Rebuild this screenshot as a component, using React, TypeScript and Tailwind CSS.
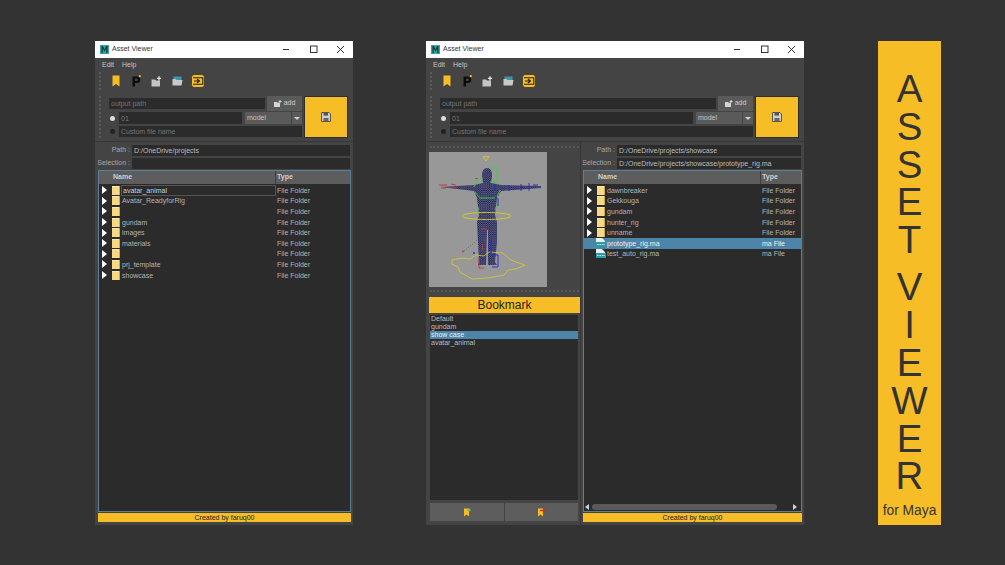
const font = "font-['Liberation_Sans',Arial,sans-serif]";

function MayaLogo() {
  return (
    <svg width="9" height="9" viewBox="0 0 9 9">
      <rect width="9" height="9" fill="#37a5a0" />
      <path d="M1.5 8V1h1.4L4.5 4.5 6.1 1h1.4v7H6.2V3.6L4.5 6.8 2.8 3.6V8z" fill="#12393d" />
    </svg>
  );
}

function TitleBar() {
  return (
    <div className="h-[17px] bg-white flex items-center pl-[5px] pr-[9px] shrink-0">
      <MayaLogo />
      <span className="ml-[3px] text-[7px] text-[#333]">Asset Viewer</span>
      <svg className="ml-auto" width="61" height="9" viewBox="0 0 61 9" fill="none" stroke="#333" strokeWidth="1">
        <path d="M0 4.5h6" />
        <rect x="27.5" y="1" width="6.5" height="6.5" />
        <path d="M54 1l7 7M61 1l-7 7" />
      </svg>
    </div>
  );
}

function Bookmark() {
  return (
    <svg width="8" height="12" viewBox="0 0 8 12">
      <path d="M0.5 0.5h7v11L4 9 0.5 11.5z" fill="#f6bd27" />
    </svg>
  );
}

function ToolIcon({ children }: { children: React.ReactNode }) {
  return <div className="w-[20.6px] flex justify-center shrink-0">{children}</div>;
}

function Toolbar() {
  return (
    <div className="h-[18px] mb-[6px] flex items-center shrink-0 pl-[4px]">
      <div className="h-[18px] w-[3px] border-l-2 border-dotted border-[#5a5a5a]" />
      <div className="ml-[3.5px] flex items-center">
        <ToolIcon><Bookmark /></ToolIcon>
        <ToolIcon>
          <svg width="9" height="12" viewBox="0 0 9 12">
            <path fillRule="evenodd" d="M0.5 1.5h4.5a3 3 0 0 1 0 6.5H3v3.5H0.5zM3 3.5v2.5h1.6a1.25 1.25 0 0 0 0-2.5z" fill="#0c0c0c" />
            <circle cx="7.8" cy="1.2" r="1.1" fill="#f6bd27" />
          </svg>
        </ToolIcon>
        <ToolIcon>
          <svg width="11" height="11" viewBox="0 0 11 11">
            <path d="M0.5 3.5h3.5l1 1h4v6h-8.5z" fill="#c4c4c4" />
            <path d="M8 0.3v4.2M5.9 2.4h4.2" stroke="#e6e6e6" strokeWidth="1.3" />
          </svg>
        </ToolIcon>
        <ToolIcon>
          <svg width="11" height="10" viewBox="0 0 11 10">
            <path d="M1.5 0.5h8v4h-8z" fill="#3d97ab" />
            <path d="M0.5 3h3l1 1h6l-1 5.5h-9z" fill="#c8c8c8" />
          </svg>
        </ToolIcon>
        <ToolIcon>
          <svg width="14" height="14" viewBox="0 0 14 14" fill="none">
            <rect x="0.5" y="0.5" width="13" height="13" rx="3" fill="#f6bd27" stroke="#2a2a2a" strokeWidth="0.7" />
            <path d="M2 3.8h9.8v6.4H2" stroke="#222" strokeWidth="1.1" />
            <path d="M3 7h5M6 5l2.4 2L6 9" stroke="#222" strokeWidth="1.2" />
          </svg>
        </ToolIcon>
      </div>
    </div>
  );
}

function Floppy() {
  return (
    <svg width="10" height="10" viewBox="0 0 10 10">
      <path d="M0.5 0.5h7.5l1.5 1.5v7.5h-9z" fill="#cfcfcf" stroke="#3a3a3a" strokeWidth="0.8" />
      <rect x="2.5" y="1" width="4.5" height="2.6" fill="#555" />
      <rect x="2.5" y="6" width="5" height="3" fill="#666" />
    </svg>
  );
}

function Field({ text, faint }: { text?: string; faint?: boolean }) {
  return (
    <div className={`flex-1 min-w-0 bg-[#2b2b2b] flex items-center px-[2px] text-[7px] leading-none whitespace-nowrap overflow-hidden ${faint ? "text-[#757575]" : "text-[#bdbdbd]"}`}>
      {text}
    </div>
  );
}

function Radio({ on }: { on?: boolean }) {
  return <div className={`w-[5px] h-[5px] rounded-full shrink-0 ${on ? "bg-[#dcdcdc]" : "bg-[#222]"}`} />;
}

function OutputForm() {
  return (
    <div className="flex shrink-0 pl-[4px] pr-[5px] h-[42px]">
      <div className="h-[42px] w-[3px] border-l-2 border-dotted border-[#5a5a5a]" />
      <div className="flex-1 min-w-0 ml-[7px] mr-[2px] flex flex-col">
        <div className="h-[15px] flex items-center gap-[2px]">
          <div className="flex-1 min-w-0 h-[11px] flex"><Field text="output path" faint /></div>
          <div className="w-[35px] h-[15px] bg-[#5a5a5a] flex items-center justify-center gap-[2px] text-[7px] text-[#cfcfcf]">
            <svg width="8" height="7" viewBox="0 0 8 7"><path d="M0 2h3l.6.7H6V7H0z" fill="#d5d5d5" /><path d="M6 0v3M4.6 1.5h3" stroke="#d5d5d5" /></svg>
            add
          </div>
        </div>
        <div className="h-[14px] flex items-center">
          <div className="w-[10px] pl-[1px] flex"><Radio on /></div>
          <div className="flex-1 min-w-0 h-[12px] flex"><Field text="01" faint /></div>
          <div className="ml-[3px] w-[57px] h-[12px] bg-[#5a5a5a] flex items-center text-[7px] text-[#c4c4c4] pl-[2px]">
            model
            <div className="ml-auto h-full w-[11px] border-l border-[#444] flex items-center justify-center">
              <div className="w-0 h-0 border-x-[3px] border-x-transparent border-t-[3px] border-t-[#d0d0d0]" />
            </div>
          </div>
        </div>
        <div className="h-[13px] flex items-center">
          <div className="w-[10px] pl-[1px] flex"><Radio /></div>
          <div className="flex-1 min-w-0 h-[11px] flex"><Field text="Custom file name" faint /></div>
        </div>
      </div>
      <div className="w-[44px] h-[42px] bg-[#f6bd27] border border-[#2e2e2e] flex items-center justify-center shrink-0">
        <Floppy />
      </div>
    </div>
  );
}

function PathRow({ label, value }: { label: string; value?: string }) {
  return (
    <div className="h-[13px] flex items-center">
      <div className="w-[34px] pr-[2px] flex justify-end text-[7px] text-[#a8a8a8] whitespace-nowrap shrink-0">{label}</div>
      <div className="flex-1 min-w-0 h-[11px] flex mr-[1px]"><Field text={value} /></div>
    </div>
  );
}

function Arrow() {
  return <div className="w-0 h-0 border-y-[4.5px] border-y-transparent border-l-[5px] border-l-white" />;
}

function FolderIcon() {
  return (
    <svg width="8" height="9" viewBox="0 0 8 9">
      <rect width="8" height="9" fill="#f7d983" />
      <rect x="7" width="1" height="9" fill="#c9a94f" />
      <rect width="7" height="1" fill="#fbe8ad" />
    </svg>
  );
}

function MaFile() {
  return (
    <svg width="10" height="10" viewBox="0 0 10 10" className="-ml-[1px]">
      <path d="M0 0h6l3 3v2H0z" fill="#e5f2f3" />
      <rect y="4" width="10" height="5" fill="#2a9ca8" />
      <path d="M1 6.5h8" stroke="#e5f2f3" strokeWidth="1" strokeDasharray="1.5 1" />
    </svg>
  );
}

type Row = { name: string; kind?: "folder" | "file"; selected?: boolean; editing?: boolean };

function TreeRow({ row }: { row: Row }) {
  const file = row.kind === "file";
  return (
    <div className={`h-[10.6px] flex items-center text-[7px] leading-none whitespace-nowrap ${row.selected ? "bg-[#4d85a9] text-[#f0f0f0]" : "text-[#b4b4b4]"}`}>
      <div className="w-[177px] flex items-center shrink-0 h-full">
        <div className="w-[13px] pl-[3px] shrink-0 flex">{!file && <Arrow />}</div>
        <div className="w-[10px] shrink-0 flex">{file ? <MaFile /> : <FolderIcon />}</div>
        <span className={row.editing ? "flex-1 h-full flex items-center border border-[#555] -ml-[1px] pl-[1px] text-[#cfcfcf]" : ""}>{row.name}</span>
      </div>
      <span className="pl-[1px]">{file ? "ma File" : "File Folder"}</span>
    </div>
  );
}

function Tree({ rows, scrollbar }: { rows: Row[]; scrollbar?: boolean }) {
  return (
    <div className="flex-1 min-h-0 flex flex-col bg-[#2b2b2b] border border-[#5c7f95]">
      <div className="h-[13px] bg-[#5d5d5d] flex items-center text-[7px] font-bold text-[#cfcfcf] shrink-0">
        <div className="w-[177px] pl-[14px] border-r border-[#3e3e3e] h-full flex items-center shrink-0">Name</div>
        <div className="pl-[1px]">Type</div>
      </div>
      <div className="flex-1 min-h-0 pt-[1px] flex flex-col">
        {rows.map((row) => <TreeRow key={row.name + row.kind} row={row} />)}
      </div>
      {scrollbar && (
        <div className="h-[8px] flex items-center px-[1px] shrink-0">
          <div className="w-0 h-0 border-y-[3px] border-y-transparent border-r-[4px] border-r-[#d0d0d0]" />
          <div className="ml-[3px] w-[185px] h-[6px] rounded-full bg-[#5a5a5a]" />
          <div className="ml-auto mr-[3px] w-0 h-0 border-y-[3px] border-y-transparent border-l-[4px] border-l-[#d0d0d0]" />
        </div>
      )}
    </div>
  );
}

function Footer() {
  return (
    <div className="h-[9px] mt-[1px] bg-[#f6bd27] text-[#222] text-[7px] leading-[9px] text-center shrink-0">Created by faruq00</div>
  );
}

function Figure() {
  return (
    <svg width="118" height="135" viewBox="0 0 118 135">
      <defs>
        <pattern id="mesh" width="2.2" height="2.2" patternUnits="userSpaceOnUse">
          <rect width="2.2" height="2.2" fill="#24265a" />
          <path d="M0 0l2.2 2.2M2.2 0L0 2.2" stroke="#7a7b90" strokeWidth="0.4" />
        </pattern>
      </defs>
      <rect width="118" height="135" fill="#989898" />
      <path d="M12 35L45 33L54 31L53 24Q53 16 58 16Q63 16 63 24L62 31L72 33L112 34L112 36L72 39L68 46L66 63L68 70L68 90L66 110L68 113L59 113L59 78L58 78L57 113L49 113L50 110L49 90L48 70L50 63L48 46L45 39Z" fill="url(#mesh)" />
      <path d="M45 35l4-8h5M61 16h7v14h-7M46 40l4 5M71 38l-3 7M50 46h16M48 53l2 5M68 53l-2 5" stroke="#35d43a" strokeWidth="0.9" fill="none" />
      <ellipse cx="57.5" cy="64" rx="24.5" ry="3.5" stroke="#d4cb2e" strokeWidth="0.9" fill="none" />
      <path d="M54 5l6-.5-3 4.5z" stroke="#d4cb2e" strokeWidth="0.9" fill="none" />
      <path d="M23 108l10-2 8 1 6-4 8 1 5-4 14 1 8 7 5 2 9 3-9 4-8 1-4 5-16 3-16 1-12-7-2-5-6-3z" stroke="#d4cb2e" strokeWidth="0.8" fill="none" />
      <path d="M10 33h8M12 36h5M22 32l5 1M28 36h-5M46 27l3-1M52 77h6M54 92l-1 6M50 105v11h5" stroke="#c8323a" strokeWidth="0.9" fill="none" />
      <path d="M80 33v6M92 32v7M100 31v8M104 33h5M66 32v6M62 88v14M63 103h6v12h-6M69 46v8" stroke="#2424d8" strokeWidth="0.9" fill="none" />
      <path d="M35 99l10-8 5-5" stroke="#555" strokeWidth="0.6" strokeDasharray="1.2 1.4" fill="none" />
      <circle cx="34" cy="99.5" r="0.9" fill="#c8323a" />
      <circle cx="45" cy="101" r="0.9" fill="#2424d8" />
    </svg>
  );
}

function Grip() {
  return <div className="h-[3px] border-t-2 border-dotted border-[#565656] mx-[1px] shrink-0" />;
}

function LeftPanel() {
  const marks = ["Default", "gundam", "show case", "avatar_animal"];
  return (
    <div className="w-[151px] shrink-0 flex flex-col h-full">
      <div className="mt-[4px]"><Grip /></div>
      <div className="mt-[3px] w-[118px] h-[135px] shrink-0 flex"><Figure /></div>
      <div className="mt-[3px]"><Grip /></div>
      <div className="mt-[4px] h-[16px] bg-[#f6bd27] flex items-center justify-center text-[12px] text-[#222] shrink-0">Bookmark</div>
      <div className="mt-[2px] flex-1 min-h-0 ml-[1px] mr-[2px] bg-[#2b2b2b] text-[7px] text-[#bdbdbd]">
        {marks.map((m) => (
          <div key={m} className={`h-[8px] leading-[8px] pl-[1px] ${m === "show case" ? "bg-[#4d85a9] text-[#f0f0f0]" : ""}`}>{m}</div>
        ))}
      </div>
      <div className="mt-[3px] mb-[4px] ml-[1px] mr-[2px] h-[18px] bg-[#5d5d5d] flex shrink-0">
        <div className="flex-1 flex items-center justify-center border-r border-[#444]">
          <svg width="8" height="9" viewBox="0 0 8 9"><path d="M1 0.5h5v8L3.5 6.5 1 8.5z" fill="#f6bd27" /><circle cx="6" cy="2" r="1.6" fill="#6fbf5a" /></svg>
        </div>
        <div className="flex-1 flex items-center justify-center">
          <svg width="9" height="9" viewBox="0 0 9 9"><path d="M1 0.5h5v8L3.5 6.5 1 8.5z" fill="#f6bd27" /><path d="M3 2.5h6" stroke="#e02020" strokeWidth="1.4" /></svg>
        </div>
      </div>
    </div>
  );
}

const leftRows: Row[] = [
  { name: "avatar_animal", editing: true },
  { name: "Avatar_ReadyforRig" },
  { name: "" },
  { name: "gundam" },
  { name: "images" },
  { name: "materials" },
  { name: " " },
  { name: "prj_template" },
  { name: "showcase" },
];

const rightRows: Row[] = [
  { name: "dawnbreaker" },
  { name: "Gekkouga" },
  { name: "gundam" },
  { name: "hunter_rig" },
  { name: "unname" },
  { name: "prototype_rig.ma", kind: "file", selected: true },
  { name: "test_auto_rig.ma", kind: "file" },
];

function Shell({ width, children }: { width: string; children: React.ReactNode }) {
  return (
    <div className={`${width} h-[484px] bg-[#444] flex flex-col shrink-0`}>
      <TitleBar />
      <div className="h-[14px] flex items-center gap-[8px] pl-[7px] text-[7px] text-[#c4c4c4] shrink-0">
        <span>Edit</span>
        <span>Help</span>
      </div>
      <Toolbar />
      <OutputForm />
      <div className="h-[1px] mt-[3px] bg-[#373737] shrink-0" />
      {children}
    </div>
  );
}

function Banner() {
  const words = ["ASSET", "VIEWER"];
  return (
    <div className="ml-[74px] w-[63px] h-[484px] bg-[#f6bd27] flex flex-col items-center pt-[29px] shrink-0 text-[#333]">
      {words.map((w) => (
        <div key={w} className="mb-[9.5px] text-center whitespace-pre-line text-[38.5px] leading-[37.8px]">
          {w.split("").join("\n")}
        </div>
      ))}
      <div className="text-[13.8px] leading-none -mt-[1px] whitespace-nowrap">for Maya</div>
    </div>
  );
}

export default function App() {
  return (
    <div className={`w-[1005px] h-[565px] bg-[#333] overflow-hidden flex pt-[41px] pl-[95px] opacity-[0.999] ${font}`}>
      <Shell width="w-[258px]">
        <div className="flex-1 min-h-0 flex flex-col pl-[3px] pr-[2px] pt-[2px] pb-[3px]">
          <PathRow label="Path :" value="D:/OneDrive/projects" />
          <PathRow label="Selection :" />
          <div className="flex-1 min-h-0 flex"><Tree rows={leftRows} /></div>
          <Footer />
        </div>
      </Shell>
      <div className="w-[73px] shrink-0" />
      <Shell width="w-[378px]">
        <div className="flex-1 min-h-0 flex pl-[3px] pr-[2px]">
          <LeftPanel />
          <div className="w-[1px] bg-[#373737] shrink-0" />
          <div className="flex-1 min-w-0 flex flex-col pl-[2px] pt-[2px] pb-[3px]">
            <PathRow label="Path :" value="D:/OneDrive/projects/showcase" />
            <PathRow label="Selection :" value="D:/OneDrive/projects/showcase/prototype_rig.ma" />
            <div className="flex-1 min-h-0 flex"><Tree rows={rightRows} scrollbar /></div>
            <Footer />
          </div>
        </div>
      </Shell>
      <Banner />
    </div>
  );
}
